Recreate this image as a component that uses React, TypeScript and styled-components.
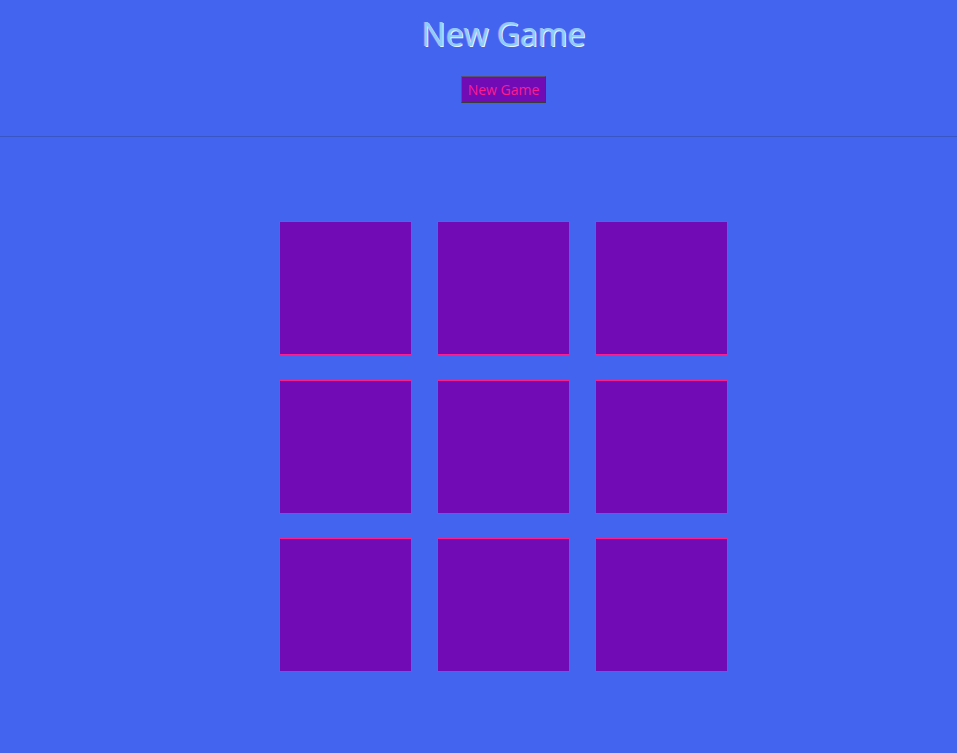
import React from "react";
import styled, { createGlobalStyle } from "styled-components";

const GlobalStyle = createGlobalStyle`
  html, body {
    margin: 0;
    padding: 0;
    background: #4364ee;
    font-family: "Open Sans", "Noto Sans", sans-serif;
  }
`;

const Page = styled.div`
  min-height: 753px;
  display: flex;
  flex-direction: column;
`;

const Header = styled.header`
  display: flex;
  flex-direction: column;
  align-items: center;
  padding: 12px 0 33px 50px;
  border-bottom: 1px solid #3a55c4;
`;

const Title = styled.h1`
  margin: 0;
  font-size: 32px;
  font-weight: 400;
  line-height: 44px;
  color: #8ccdfb;
  text-shadow: 1px 1px 0 #e6f4ff, -1px 0 0 rgba(230, 140, 255, 0.5);
`;

const NewGameButton = styled.button`
  margin-top: 20px;
  height: 27px;
  padding: 0 6px;
  background: #700bb6;
  color: #ff1c8e;
  border: 1px solid #5c5070;
  border-right-color: #3a3a3a;
  border-bottom-color: #3a3a3a;
  font-family: "Open Sans", "Noto Sans", sans-serif;
  font-size: 14px;
  cursor: pointer;
`;

const Board = styled.div`
  display: grid;
  grid-template-columns: repeat(3, 133px);
  grid-auto-rows: 134px;
  column-gap: 25px;
  row-gap: 24.5px;
  justify-content: center;
  padding: 84px 0 0 50px;
`;

const Tile = styled.div`
  box-sizing: border-box;
  background: #700bb6;
  border: 1px solid #ff1c8e;
`;

export default function App() {
  const tiles = Array.from({ length: 9 }, (_, i) => i);
  return (
    <>
      <GlobalStyle />
      <Page>
        <Header>
          <Title>New Game</Title>
          <NewGameButton>New Game</NewGameButton>
        </Header>
        <Board>
          {tiles.map((i) => (
            <Tile key={i} />
          ))}
        </Board>
      </Page>
    </>
  );
}
